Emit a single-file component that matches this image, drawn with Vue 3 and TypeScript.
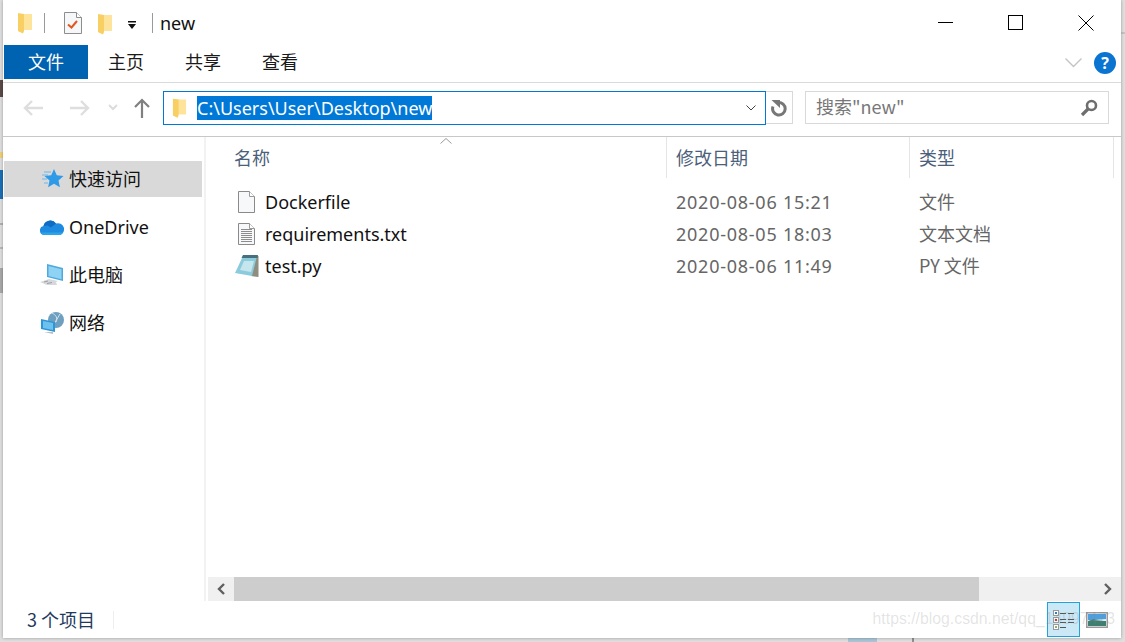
<script setup lang="ts">
const navItems = [
  { label: '快速访问', icon: 'star', active: true },
  { label: 'OneDrive', icon: 'cloud', active: false },
  { label: '此电脑', icon: 'pc', active: false },
  { label: '网络', icon: 'net', active: false },
]

const files = [
  { name: 'Dockerfile', date: '2020-08-06 15:21', type: '文件', icon: 'blank' },
  { name: 'requirements.txt', date: '2020-08-05 18:03', type: '文本文档', icon: 'text' },
  { name: 'test.py', date: '2020-08-06 11:49', type: 'PY 文件', icon: 'pad' },
]

const textLines = [6, 8, 10, 12, 14, 16, 18]

// bits of other windows showing round the edge of the screenshot
const edgeBits = [
  { left: 0, top: 80, width: 3, height: 17, color: '#5a4a48' },
  { left: 0, top: 152, width: 3, height: 6, color: '#f0cf7a' },
  { left: 0, top: 170, width: 3, height: 29, color: '#1b6fb5' },
  { left: 0, top: 223, width: 3, height: 2, color: '#b0b0b0' },
  { left: 0, top: 247, width: 3, height: 2, color: '#b8b8b8' },
  { left: 0, top: 268, width: 3, height: 25, color: '#a8a8a8' },
  { left: 848, top: 638, width: 29, height: 4, color: '#a9c4d4' },
  { left: 912, top: 638, width: 2, height: 4, color: '#8f8f8f' },
  { left: 1121, top: 32, width: 4, height: 2, color: '#c4c4c4' },
]
</script>

<template>
  <div class="page">
    <i
      v-for="bit in edgeBits"
      :key="bit.top + bit.left"
      class="edge-bit"
      :style="{ left: bit.left + 'px', top: bit.top + 'px', width: bit.width + 'px', height: bit.height + 'px', background: bit.color }"
    ></i>
    <div class="window">
      <header class="titlebar">
        <svg class="qa-folder" width="16" height="22" viewBox="0 0 16 22">
          <path d="M1 2h14v16H6v3l-5-2z" fill="#fde49a" />
          <path d="M1 1l6 1v17l-1 2.500-5-2.500z" fill="#f8cf62" />
        </svg>
        <i class="sep"></i>
        <svg class="qa-check" width="18" height="22" viewBox="0 0 18 22">
          <path d="M.5.5h12l5 5v16H.5z" fill="#f6f7f9" stroke="#8d8d8d" />
          <path d="M12.500.5v5h5" fill="#fff" stroke="#8d8d8d" />
          <path d="M4 12.500l3.500 3L13 9" fill="none" stroke="#e2571e" stroke-width="2" />
        </svg>
        <svg class="qa-folder2" width="16" height="22" viewBox="0 0 16 22">
          <path d="M1 2h14v16H6v3l-5-2z" fill="#fde49a" />
          <path d="M1 1l6 1v17l-1 2.500-5-2.500z" fill="#f8cf62" />
        </svg>
        <svg class="qa-drop" width="10" height="10" viewBox="0 0 10 10">
          <path d="M1 1h8v1.400H1zM1 4h8L5 9z" fill="#111" />
        </svg>
        <i class="sep sep-b"></i>
        <span class="title">new</span>
        <div class="caption">
          <svg width="16" height="16" viewBox="0 0 16 16"><path d="M0 7.500h15" stroke="#000" /></svg>
          <svg width="16" height="16" viewBox="0 0 16 16"><rect x=".5" y=".5" width="14" height="14" fill="none" stroke="#000" /></svg>
          <svg width="16" height="16" viewBox="0 0 16 16"><path d="M.5.5l15 15M15.500.5l-15 15" stroke="#000" /></svg>
        </div>
      </header>

      <div class="ribbon">
        <div class="tab tab-file">文件</div>
        <div class="tab tab-home">主页</div>
        <div class="tab tab-share">共享</div>
        <div class="tab tab-view">查看</div>
        <div class="ribbon-right">
          <svg width="17" height="10" viewBox="0 0 17 10"><path d="M.5.5l8 8 8-8" fill="none" stroke="#c4c4c4" stroke-width="1.400" /></svg>
          <span class="help">?</span>
        </div>
      </div>

      <div class="navbar">
        <div class="nav-buttons">
          <svg width="22" height="18" viewBox="0 0 22 18"><path d="M21 9H3M10 2L3 9l7 7" fill="none" stroke="#dedede" stroke-width="2.400" /></svg>
          <svg class="nav-fwd" width="22" height="18" viewBox="0 0 22 18"><path d="M1 9h18M12 2l7 7-7 7" fill="none" stroke="#dedede" stroke-width="2.400" /></svg>
          <svg class="nav-hist" width="10" height="7" viewBox="0 0 10 7"><path d="M1 1l4 4 4-4" fill="none" stroke="#dcdcdc" stroke-width="2" /></svg>
          <svg class="nav-up" width="18" height="20" viewBox="0 0 18 20"><path d="M9 20V2M2 9l7-7 7 7" fill="none" stroke="#808080" stroke-width="2.200" /></svg>
        </div>
        <div class="address">
          <svg width="15" height="22" viewBox="0 0 16 22">
            <path d="M1 2h14v16H6v3l-5-2z" fill="#fde49a" />
            <path d="M1 1l6 1v17l-1 2.500-5-2.500z" fill="#f8cf62" />
          </svg>
          <span class="path">C:\Users\User\Desktop\new</span>
          <svg class="addr-caret" width="10" height="6" viewBox="0 0 10 6"><path d="M.5.5L5 5 9.500.5" fill="none" stroke="#444" /></svg>
        </div>
        <div class="refresh">
          <svg width="18" height="18" viewBox="0 0 18 18">
            <path d="M8 3.500A6.300 6.300 0 1 1 3 7.500" fill="none" stroke="#777" stroke-width="3" />
            <path d="M1.500 1H10v8z" fill="#777" />
          </svg>
        </div>
        <div class="search">
          <span>搜索"new"</span>
          <svg width="18" height="18" viewBox="0 0 18 18">
            <circle cx="11.500" cy="6.500" r="4.500" fill="none" stroke="#6e6e6e" stroke-width="2.600" />
            <path d="M8 10L2 16" stroke="#6e6e6e" stroke-width="3.200" />
          </svg>
        </div>
      </div>

      <div class="body">
        <aside class="sidebar">
          <div v-for="item in navItems" :key="item.label" class="side-item" :class="{ active: item.active }">
            <svg v-if="item.icon === 'star'" width="24" height="20" viewBox="0 0 24 20">
              <path d="M4 3h7M2 6h6M2 10h5M4 14h4" stroke="#6fb6ea" />
              <path d="M14 0l2.800 6.300 6.700.7-5 4.500 1.400 6.700-5.900-3.400-5.900 3.400 1.400-6.700-5-4.500 6.700-.7z" fill="#2f9be8" />
            </svg>
            <svg v-else-if="item.icon === 'cloud'" width="24" height="16" viewBox="0 0 24 16">
              <path d="M4.500 16a4.500 4.500 0 0 1-1-8.900A7 7 0 0 1 16 4.500a5.500 5.500 0 0 1 4 11.500z" fill="#1e8be0" />
              <path d="M3.500 7.100A7 7 0 0 1 16 4.500l-5 4-3.500-2z" fill="#0f6cc4" />
              <path d="M4.500 16a4.500 4.500 0 0 1-3.500-2.500h22a5 5 0 0 1-3 2.500z" fill="#2aa5ea" />
            </svg>
            <svg v-else-if="item.icon === 'pc'" width="24" height="22" viewBox="0 0 24 22">
              <path d="M7 0l16 4v13l-16-4z" fill="#4fa9de" />
              <path d="M8.500 2l13 3.200v10L8.500 12z" fill="#8ed3f4" />
              <path d="M0 18l9-3 9 2-2 1 1 3H7z" fill="#d5d8dc" />
              <path d="M4 18l4-1M7 19.500l5-1" stroke="#9aa0a6" />
            </svg>
            <svg v-else width="24" height="22" viewBox="0 0 24 22">
              <circle cx="16" cy="8" r="8" fill="#6f9fbe" />
              <path d="M12 1c4 2 6 5 4 9M20 2l-6 10" fill="none" stroke="#d2e3ee" />
              <path d="M1 7l14 3v10L1 17z" fill="#2e96d8" />
              <path d="M3 9l10 2v7L3 16z" fill="#6cc1ee" />
              <path d="M4 20l9 2v-2H7z" fill="#b9bec2" />
            </svg>
            <span>{{ item.label }}</span>
          </div>
        </aside>

        <main class="main">
          <div class="columns">
            <div class="col col-name">
              名称
              <svg class="sort" width="12" height="6" viewBox="0 0 12 6"><path d="M.5 5.500L6 .5l5.500 5" fill="none" stroke="#9a9a9a" /></svg>
            </div>
            <div class="col col-date">修改日期</div>
            <div class="col col-type">类型</div>
          </div>
          <div class="rows">
            <div v-for="file in files" :key="file.name" class="row">
              <div class="cell-name">
                <svg width="24" height="24" viewBox="0 0 24 24">
                  <template v-if="file.icon === 'pad'">
                    <path d="M21 2h2.500v21L16 22z" fill="#8d8d80" />
                    <path d="M8 2h14l-5 20L0 19z" fill="#8ccbdc" />
                    <path d="M9 7h10l-3 11L5 16z" fill="#c6e6ee" />
                    <path d="M8 1h15l-.5 3H6.500z" fill="#47707f" />
                  </template>
                  <template v-else>
                    <path d="M3.500 1.500h11l5 5v16h-16z" fill="#f7f8fa" stroke="#8a8a8a" />
                    <path d="M14.500 1.500v5h5" fill="#fff" stroke="#9a9a9a" />
                    <template v-if="file.icon === 'text'">
                      <path v-for="n in textLines" :key="n" :d="`M6 ${n + 1.5}h11`" stroke="#8c8c8c" />
                    </template>
                  </template>
                </svg>
                <span>{{ file.name }}</span>
              </div>
              <div class="cell-date">{{ file.date }}</div>
              <div class="cell-type">{{ file.type }}</div>
            </div>
          </div>
          <div class="spacer"></div>
          <div class="hscroll">
            <div class="arrow">
              <svg width="10" height="12" viewBox="0 0 10 12"><path d="M8 1L3 6l5 5" fill="none" stroke="#606060" stroke-width="2.400" /></svg>
            </div>
            <div class="thumb"></div>
            <div class="track"></div>
            <div class="arrow">
              <svg width="10" height="12" viewBox="0 0 10 12"><path d="M2 1l5 5-5 5" fill="none" stroke="#606060" stroke-width="2.400" /></svg>
            </div>
          </div>
        </main>
      </div>

      <footer class="status">
        <span class="count">3 个项目</span>
        <i class="status-sep"></i>
        <div class="views">
          <div class="view view-on">
            <svg width="22" height="20" viewBox="0 0 22 20">
              <rect x=".5" y=".5" width="5" height="5" fill="#fff" stroke="#999" />
              <rect x="2" y="2" width="2" height="2" fill="#2f7fc4" />
              <rect x=".5" y="7.500" width="5" height="5" fill="#fff" stroke="#999" />
              <rect x="2" y="9" width="2" height="2" fill="#c0392b" />
              <rect x=".5" y="14.500" width="5" height="5" fill="#fff" stroke="#999" />
              <rect x="2" y="16" width="2" height="2" fill="#8fae6a" />
              <path d="M7 3.500h6M15 3.500h6M7 9.500h6M15 9.500h6M7 12.500h6M15 12.500h6M7 17.500h6" stroke="#555" />
            </svg>
          </div>
          <div class="view">
            <svg width="22" height="16" viewBox="0 0 22 16">
              <rect x=".75" y=".75" width="20.500" height="14.500" fill="#fff" stroke="#9a9a9a" stroke-width="1.500" />
              <rect x="2" y="2" width="18" height="6" fill="#4f9fe0" />
              <path d="M2 9l6-2 12 2v5H2z" fill="#3f7f72" />
              <path d="M7 8l13-1v2z" fill="#e6f2f5" />
            </svg>
          </div>
        </div>
        <span class="watermark">https://blog.csdn.net/qq_14997473</span>
      </footer>
    </div>
  </div>
</template>

<style>
html, body {
  margin: 0;
  background: #dedede;
  overflow: hidden;
}
</style>

<style scoped>
.page {
  position: relative;
  width: 1125px;
  height: 642px;
  padding-left: 3px;
  box-sizing: border-box;
  font-family: "Noto Sans CJK SC", "Noto Sans", sans-serif;
  color: #1a1a1a;
}

.edge-bit {
  position: absolute;
}

.window {
  position: relative;
  width: 1118px;
  height: 638px;
  background: #fff;
  display: flex;
  flex-direction: column;
  box-shadow: 0 0 3px rgba(0, 0, 0, 0.3);
}

.titlebar {
  height: 45px;
  flex: none;
  display: flex;
  align-items: center;
  padding-left: 14px;
  box-sizing: border-box;
}

.qa-folder { margin-right: 11px; }
.sep { width: 1px; height: 20px; background: #9a9a9a; margin-right: 19px; }
.sep-b { margin: 0 7px 0 15px; }
.qa-check { margin-right: 15px; }
.qa-folder2 { margin-right: 14px; margin-top: 2px; }
.qa-drop { margin-top: 4px; }

.title {
  font-family: "Noto Sans", sans-serif;
  font-size: 18px;
  color: #111;
}

.caption {
  margin-left: auto;
  display: flex;
  justify-content: flex-end;
  gap: 54px;
  padding-right: 27px;
}

.ribbon {
  height: 38px;
  flex: none;
  display: flex;
  align-items: flex-start;
  border-bottom: 1px solid #dadada;
  box-sizing: border-box;
  font-size: 18px;
}

.tab {
  height: 34px;
  display: flex;
  align-items: center;
  justify-content: center;
  padding-bottom: 2px;
  box-sizing: border-box;
}

.tab-file { width: 84px; margin-left: 1px; background: #0063b1; color: #fff; }
.tab-home { width: 36px; margin-left: 20px; }
.tab-share { width: 36px; margin-left: 41px; }
.tab-view { width: 36px; margin-left: 41px; }

.ribbon-right {
  margin-left: auto;
  margin-top: 1px;
  display: flex;
  align-items: center;
  gap: 12px;
  height: 34px;
  padding-right: 5px;
}

.help {
  width: 22px;
  height: 22px;
  border-radius: 50%;
  background: #0a74d1;
  color: #fff;
  font: bold 16px/22px "Noto Sans", sans-serif;
  text-align: center;
}

.navbar {
  height: 54px;
  flex: none;
  display: flex;
  align-items: center;
  border-bottom: 1px solid #c8c8c8;
  box-sizing: border-box;
  padding-bottom: 4px;
}

.nav-buttons {
  width: 160px;
  flex: none;
  display: flex;
  align-items: center;
  padding-left: 19px;
  box-sizing: border-box;
}

.nav-fwd { margin-left: 25px; }
.nav-hist { margin-left: 17px; }
.nav-up { margin-left: 15px; }

.address {
  width: 603px;
  height: 34px;
  flex: none;
  border: 1px solid #0078d7;
  box-sizing: border-box;
  display: flex;
  align-items: center;
  padding-left: 8px;
}

.path {
  margin-left: 10px;
  background: #0078d7;
  color: #fff;
  font-family: "Noto Sans", sans-serif;
  font-size: 18px;
  line-height: 24px;
}

.addr-caret { margin-left: auto; margin-right: 9px; }

.refresh {
  width: 27px;
  height: 33px;
  flex: none;
  border: 1px solid #d9d9d9;
  border-left: 0;
  box-sizing: border-box;
  display: flex;
  align-items: center;
  justify-content: center;
}

.search {
  width: 304px;
  height: 33px;
  flex: none;
  margin-left: 12px;
  border: 1px solid #d9d9d9;
  box-sizing: border-box;
  display: flex;
  align-items: center;
  justify-content: space-between;
  padding: 0 10px;
  color: #777;
  font-size: 18px;
}

.search span {
  line-height: 1;
  padding-bottom: 3px;
}

.body {
  flex: 1;
  min-height: 0;
  display: flex;
}

.sidebar {
  width: 203px;
  flex: none;
  border-right: 2px solid #f2f2f2;
  padding-top: 24px;
  box-sizing: border-box;
  font-size: 18px;
}

.side-item {
  height: 36px;
  margin-right: 2px;
  margin-left: 1px;
  margin-bottom: 12px;
  display: flex;
  align-items: center;
  gap: 5px;
  padding-left: 36px;
  box-sizing: border-box;
  color: #111;
}

.side-item span {
  font-family: "Noto Sans", "Noto Sans CJK SC", sans-serif;
  line-height: 1;
}

.side-item.active { background: #d9d9d9; }

.main {
  flex: 1;
  min-width: 0;
  display: flex;
  flex-direction: column;
}

.columns {
  height: 41px;
  flex: none;
  display: flex;
  color: #4c607a;
  font-size: 18px;
}

.col {
  position: relative;
  display: flex;
  align-items: center;
  padding-left: 9px;
  padding-bottom: 2px;
  box-sizing: border-box;
  border-right: 1px solid #e5e5e5;
}

.col-name { width: 461px; padding-left: 28px; }
.col-date { width: 243px; }
.col-type { width: 204px; }

.sort {
  position: absolute;
  left: 234px;
  top: 1px;
}

.rows {
  padding-top: 8px;
  font-size: 18px;
}

.row {
  height: 32px;
  display: flex;
  align-items: center;
}

.cell-name {
  width: 461px;
  display: flex;
  align-items: center;
  gap: 6px;
  padding-left: 29px;
  box-sizing: border-box;
  color: #111;
  font-family: "Noto Sans", sans-serif;
}

.cell-date {
  width: 243px;
  padding-left: 9px;
  box-sizing: border-box;
  color: #666;
  font-family: "Noto Sans", sans-serif;
  letter-spacing: 0.75px;
}

.cell-type {
  padding-left: 9px;
  padding-bottom: 2px;
  color: #666;
}

.spacer { flex: 1; }

.hscroll {
  height: 24px;
  flex: none;
  display: flex;
  margin-left: 2px;
  background: #f0f0f0;
}

.arrow {
  width: 26px;
  display: flex;
  align-items: center;
  justify-content: center;
}

.thumb { width: 745px; background: #cdcdcd; }
.track { flex: 1; }

.status {
  position: relative;
  height: 37px;
  flex: none;
  display: flex;
  align-items: center;
  padding-left: 24px;
  box-sizing: border-box;
  font-size: 18px;
  color: #1f3a5c;
}

.count {
  width: 86px;
  padding-bottom: 2px;
}

.status-sep { width: 1px; height: 18px; background: #eee; }

.views {
  margin-left: auto;
  margin-right: 8px;
  display: flex;
  align-items: center;
  gap: 1px;
}

.view {
  width: 32px;
  height: 35px;
  display: flex;
  align-items: center;
  justify-content: center;
  box-sizing: border-box;
}

.view-on {
  width: 33px;
  background: #cbe8f6;
  border: 1px solid #26a0da;
}

.watermark {
  position: absolute;
  right: 6px;
  top: 9px;
  font-family: "Liberation Sans", sans-serif;
  font-size: 15.8px;
  color: rgba(130, 130, 130, 0.22);
}
</style>
